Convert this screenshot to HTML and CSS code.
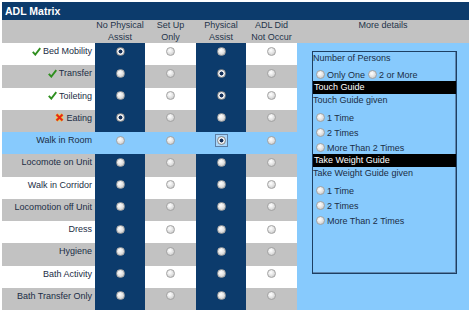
FILE: index.html
```html
<!DOCTYPE html>
<html>
<head>
<meta charset="utf-8">
<link rel="stylesheet" href="styles.css">
</head>
<body>
<div class="matrix">
  <div class="title">ADL Matrix</div>

  <div class="hd"></div>
  <div class="hd">No Physical<br>Assist</div>
  <div class="hd">Set Up<br>Only</div>
  <div class="hd">Physical<br>Assist</div>
  <div class="hd">ADL Did<br>Not Occur</div>
  <div class="hd">More details</div>

  <div class="details">
    <div class="box">
      <div class="txt">Number of Persons</div>
      <div class="opt first"><span class="rb"></span><span class="lbl">Only One</span><span class="rb sp"></span><span class="lbl">2 or More</span></div>
      <div class="bar">Touch Guide</div>
      <div class="txt given">Touch Guide given</div>
      <div class="opt first"><span class="rb"></span><span class="lbl">1 Time</span></div>
      <div class="opt"><span class="rb"></span><span class="lbl">2 Times</span></div>
      <div class="opt"><span class="rb"></span><span class="lbl">More Than 2 Times</span></div>
      <div class="bar">Take Weight Guide</div>
      <div class="txt given">Take Weight Guide given</div>
      <div class="opt first"><span class="rb"></span><span class="lbl">1 Time</span></div>
      <div class="opt"><span class="rb"></span><span class="lbl">2 Times</span></div>
      <div class="opt"><span class="rb"></span><span class="lbl">More Than 2 Times</span></div>
    </div>
  </div>

  <!-- Bed Mobility -->
  <div class="c lab w"><svg class="ok" width="9" height="9" viewBox="0 0 9 9"><path d="M0.8 4.8 L3.3 7.6 L8.3 1.2" stroke="#2f8f1f" stroke-width="1.9" fill="none"/></svg>Bed Mobility</div>
  <div class="c dk"><span class="rb on"></span></div>
  <div class="c w"><span class="rb"></span></div>
  <div class="c dk"><span class="rb"></span></div>
  <div class="c w"><span class="rb"></span></div>

  <!-- Transfer -->
  <div class="c lab g"><svg class="ok" width="9" height="9" viewBox="0 0 9 9"><path d="M0.8 4.8 L3.3 7.6 L8.3 1.2" stroke="#2f8f1f" stroke-width="1.9" fill="none"/></svg>Transfer</div>
  <div class="c dk"><span class="rb"></span></div>
  <div class="c g"><span class="rb"></span></div>
  <div class="c dk"><span class="rb on"></span></div>
  <div class="c g"><span class="rb"></span></div>

  <!-- Toileting -->
  <div class="c lab w"><svg class="ok" width="9" height="9" viewBox="0 0 9 9"><path d="M0.8 4.8 L3.3 7.6 L8.3 1.2" stroke="#2f8f1f" stroke-width="1.9" fill="none"/></svg>Toileting</div>
  <div class="c dk"><span class="rb"></span></div>
  <div class="c w"><span class="rb"></span></div>
  <div class="c dk"><span class="rb on"></span></div>
  <div class="c w"><span class="rb"></span></div>

  <!-- Eating -->
  <div class="c lab g"><svg class="ok" width="9" height="9" viewBox="0 0 9 9"><path d="M1.5 1.5 L7.5 7.5 M7.5 1.5 L1.5 7.5" stroke="#f2c12e" stroke-width="3.6" fill="none"/><path d="M1.5 1.5 L7.5 7.5 M7.5 1.5 L1.5 7.5" stroke="#e3241b" stroke-width="1.8" fill="none"/></svg>Eating</div>
  <div class="c dk"><span class="rb on"></span></div>
  <div class="c g"><span class="rb"></span></div>
  <div class="c dk"><span class="rb"></span></div>
  <div class="c g"><span class="rb"></span></div>

  <!-- Walk in Room (selected) -->
  <div class="c lab sel">Walk in Room</div>
  <div class="c sel"><span class="rb"></span></div>
  <div class="c sel"><span class="rb"></span></div>
  <div class="c sel"><span class="focus"><span class="rb on"></span></span></div>
  <div class="c sel"><span class="rb"></span></div>

  <!-- Locomote on Unit -->
  <div class="c lab g">Locomote on Unit</div>
  <div class="c dk"><span class="rb"></span></div>
  <div class="c g"><span class="rb"></span></div>
  <div class="c dk"><span class="rb"></span></div>
  <div class="c g"><span class="rb"></span></div>

  <!-- Walk in Corridor -->
  <div class="c lab w">Walk in Corridor</div>
  <div class="c dk"><span class="rb"></span></div>
  <div class="c w"><span class="rb"></span></div>
  <div class="c dk"><span class="rb"></span></div>
  <div class="c w"><span class="rb"></span></div>

  <!-- Locomotion off Unit -->
  <div class="c lab g">Locomotion off Unit</div>
  <div class="c dk"><span class="rb"></span></div>
  <div class="c g"><span class="rb"></span></div>
  <div class="c dk"><span class="rb"></span></div>
  <div class="c g"><span class="rb"></span></div>

  <!-- Dress -->
  <div class="c lab w">Dress</div>
  <div class="c dk"><span class="rb"></span></div>
  <div class="c w"><span class="rb"></span></div>
  <div class="c dk"><span class="rb"></span></div>
  <div class="c w"><span class="rb"></span></div>

  <!-- Hygiene -->
  <div class="c lab g">Hygiene</div>
  <div class="c dk"><span class="rb"></span></div>
  <div class="c g"><span class="rb"></span></div>
  <div class="c dk"><span class="rb"></span></div>
  <div class="c g"><span class="rb"></span></div>

  <!-- Bath Activity -->
  <div class="c lab w">Bath Activity</div>
  <div class="c dk"><span class="rb"></span></div>
  <div class="c w"><span class="rb"></span></div>
  <div class="c dk"><span class="rb"></span></div>
  <div class="c w"><span class="rb"></span></div>

  <!-- Bath Transfer Only -->
  <div class="c lab g">Bath Transfer Only</div>
  <div class="c dk"><span class="rb"></span></div>
  <div class="c g"><span class="rb"></span></div>
  <div class="c dk"><span class="rb"></span></div>
  <div class="c g"><span class="rb"></span></div>
</div>
</body>
</html>
```

FILE: styles.css
```css
html, body {
  margin: 0;
  padding: 0;
  background: #ffffff;
}

body {
  font-family: "Liberation Sans", Arial, sans-serif;
  font-size: 9px;
  color: #1b2d45;
}

.matrix {
  margin: 2px 0 0 2px;
  width: 467px;
  display: grid;
  grid-template-columns: 93px 50px 51px 50px 51px 172px;
  grid-template-rows: 18px 23px repeat(12, 22.25px);
}

.title {
  grid-column: 1 / -1;
  background: #0c3b6c;
  color: #ffffff;
  font-weight: bold;
  font-size: 10.5px;
  padding-left: 3px;
  display: flex;
  align-items: center;
}

.hd {
  background: #c2c2c2;
  text-align: center;
  line-height: 11.5px;
  color: #24344a;
}

.c {
  display: flex;
  align-items: center;
  justify-content: center;
  padding-bottom: 6px;
  box-sizing: border-box;
}

.lab {
  justify-content: flex-end;
  padding-right: 3px;
  gap: 2px;
  white-space: nowrap;
}

.w { background: #ffffff; }
.g { background: #c2c2c2; }
.dk { background: #0c3b6c; }
.sel { background: #87cafd; }

.ok { display: block; }

.rb {
  display: inline-block;
  width: 9px;
  height: 9px;
  box-sizing: border-box;
  border-radius: 50%;
  border: 1px solid #a3a3a3;
  background: radial-gradient(circle at 40% 35%, #ffffff 0, #e6e6e6 45%, #bdbdbd 100%);
  flex: none;
}

.rb.on {
  border-color: #8a8a8a;
  background: radial-gradient(circle at 50% 50%, #14305a 0, #14305a 1.7px, #ffffff 2.3px, #e4e4e4 70%, #c4c4c4 100%);
}

.focus {
  display: flex;
  align-items: center;
  justify-content: center;
  width: 13px;
  height: 13px;
  box-sizing: border-box;
  border: 1px solid #5d7fa5;
  background: #a9d6fb;
}

.details {
  grid-column: 6;
  grid-row: 3 / span 12;
  background: #87cafd;
  padding: 8px 0 0 15px;
}

.box {
  width: 145px;
  height: 223px;
  box-sizing: border-box;
  border: 1px solid #1d3f63;
  box-shadow: inset -1px -1px 0 #5f86ad;
  display: flex;
  flex-direction: column;
}

.txt {
  height: 12px;
  line-height: 12px;
  padding-left: 0;
  white-space: nowrap;
}

.txt.given {
  height: 13px;
  line-height: 13px;
}

.opt {
  height: 13px;
  margin-top: 2px;
  display: flex;
  align-items: center;
  padding-left: 3px;
  white-space: nowrap;
}

.opt.first {
  margin-top: 4px;
}

.opt .lbl {
  margin-left: 2px;
}

.opt .sp {
  margin-left: 3px;
}

.bar {
  height: 13px;
  line-height: 13px;
  background: #000000;
  color: #ffffff;
  padding-left: 1px;
  white-space: nowrap;
}
```
